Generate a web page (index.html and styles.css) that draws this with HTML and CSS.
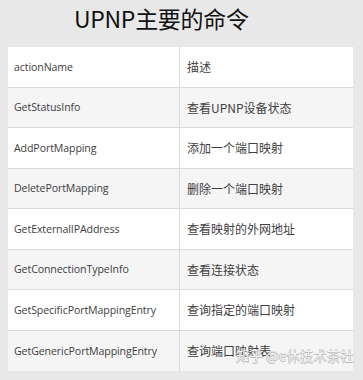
FILE: index.html
```html
<!DOCTYPE html>
<html>
<head>
<meta charset="utf-8">
<link rel="stylesheet" href="styles.css">
</head>
<body>
<div class="page">
  <h1 class="title">UPNP主要的命令</h1>
  <div class="table">
    <div class="row"><div class="c1">actionName</div><div class="c2">描述</div></div>
    <div class="row alt"><div class="c1">GetStatusInfo</div><div class="c2">查看UPNP设备状态</div></div>
    <div class="row"><div class="c1">AddPortMapping</div><div class="c2">添加一个端口映射</div></div>
    <div class="row alt"><div class="c1">DeletePortMapping</div><div class="c2">删除一个端口映射</div></div>
    <div class="row"><div class="c1">GetExternalIPAddress</div><div class="c2">查看映射的外网地址</div></div>
    <div class="row alt"><div class="c1">GetConnectionTypeInfo</div><div class="c2">查看连接状态</div></div>
    <div class="row"><div class="c1">GetSpecificPortMappingEntry</div><div class="c2">查询指定的端口映射</div></div>
    <div class="row alt last"><div class="c1">GetGenericPortMappingEntry</div><div class="c2">查询端口映射表</div></div>
  </div>
  <div class="watermark">知乎 @e休技术茶社</div>
</div>
</body>
</html>
```
FILE: styles.css
```css
html, body {
  margin: 0;
  padding: 0;
  background: #e8e8e8;
}
.page {
  position: relative;
  width: 363px;
  height: 380px;
  overflow: hidden;
  padding: 0 10px 0 8px;
  box-sizing: border-box;
  font-family: "Open Sans", "Noto Sans CJK SC", sans-serif;
}
.title {
  margin: 0;
  height: 47px;
  padding-left: 66px;
  box-sizing: border-box;
  font-family: "Noto Sans CJK SC", sans-serif;
  font-weight: 400;
  font-size: 23px;
  line-height: 36px;
  color: #111;
  letter-spacing: -0.3px;
}
.table {
  display: flex;
  flex-direction: column;
  width: 345px;
}
.row {
  display: grid;
  grid-template-columns: 172px 1fr;
  height: 40.5px;
  background: #ffffff;
  border-bottom: 1px solid #dadada;
  box-sizing: border-box;
  align-items: center;
  font-size: 10.6px;
  color: #404040;
}
.row.alt { background: #f5f5f5; }
.row.last { border-bottom: none; }
.c1 {
  height: 100%;
  display: flex;
  align-items: center;
  padding-left: 6px;
  border-right: 1px solid #dadada;
  box-sizing: border-box;
  letter-spacing: -0.1px;
}
.c2 {
  padding-left: 7px;
  font-family: "Noto Sans CJK SC", sans-serif;
  font-size: 12px;
}
.watermark {
  position: absolute;
  left: 236px;
  top: 345px;
  font-family: "Noto Sans CJK SC", sans-serif;
  font-size: 13.5px;
  color: rgba(255, 255, 255, 0.9);
  text-shadow: 0.5px 0 0 rgba(150,150,150,0.6), -0.5px 0 0 rgba(150,150,150,0.6), 0 0.5px 0 rgba(150,150,150,0.6), 0 -0.5px 0 rgba(150,150,150,0.6);
  white-space: nowrap;
}
```
